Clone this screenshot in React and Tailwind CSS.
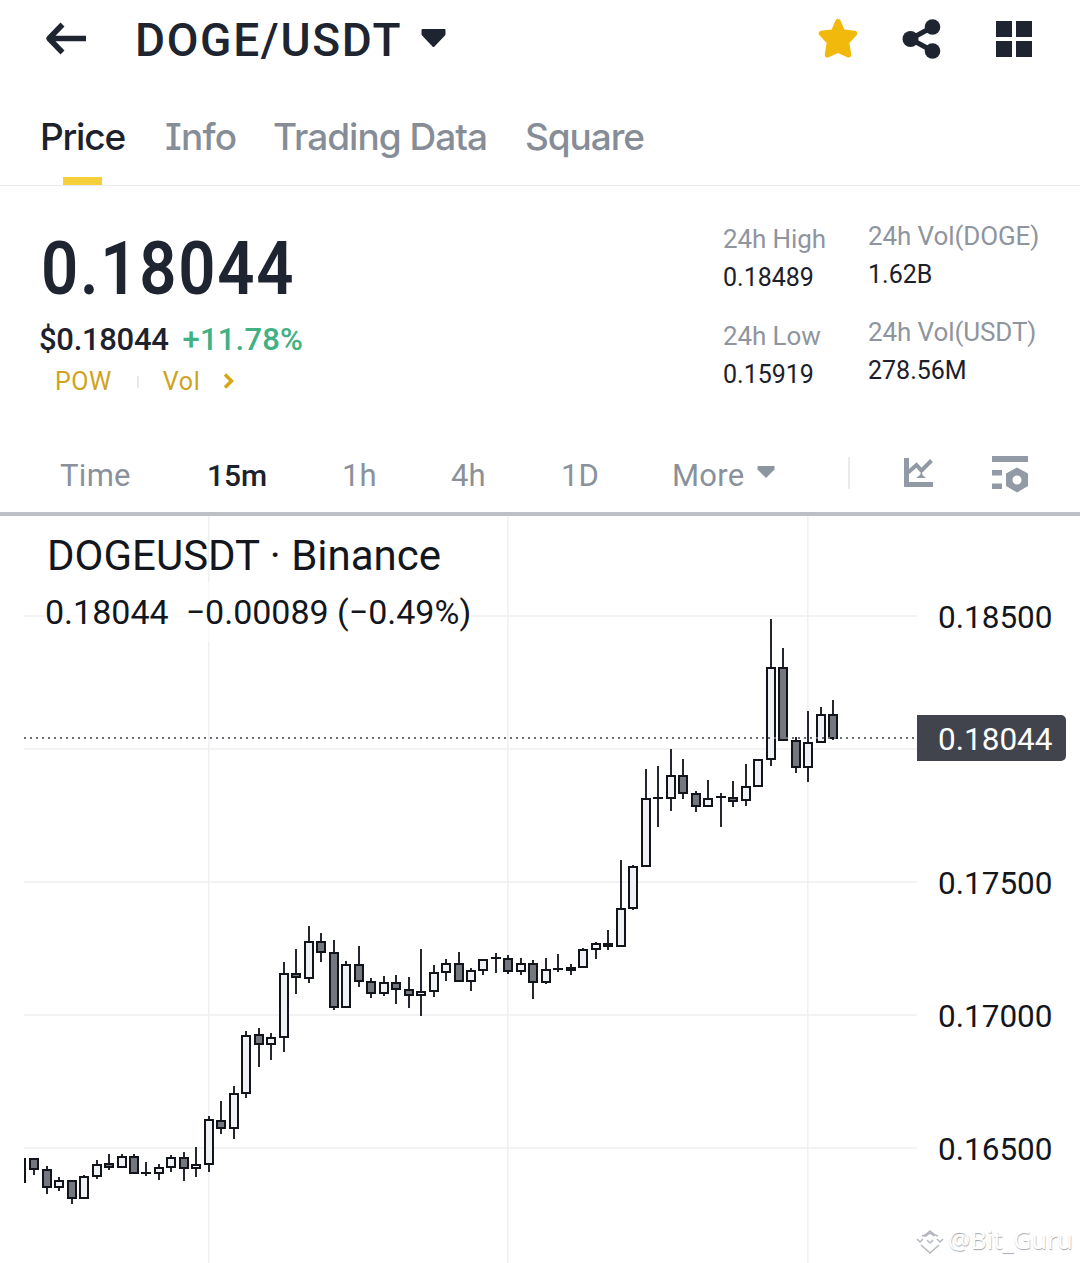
import React from "react";

// [center x, wick top, body top, body bottom, wick bottom, kind] — u: rising, d: falling
const candles = [
  [21, 1158, 1158, 1183, 1183, "u"], [34, 1158, 1158, 1170, 1175, "d"], [47, 1166, 1169, 1188, 1194, "d"],
  [59, 1177, 1180, 1188, 1191, "u"], [72, 1180, 1180, 1199, 1204, "d"], [84, 1175, 1176, 1199, 1199, "u"],
  [97, 1160, 1164, 1177, 1179, "u"], [109, 1154, 1163, 1168, 1170, "d"], [122, 1154, 1156, 1168, 1168, "u"],
  [134, 1154, 1156, 1174, 1174, "d"], [146, 1162, 1172, 1174, 1176, "d"], [159, 1164, 1167, 1174, 1180, "u"],
  [171, 1155, 1157, 1168, 1172, "u"], [184, 1152, 1157, 1169, 1181, "d"], [196, 1147, 1164, 1169, 1177, "u"],
  [209, 1116, 1119, 1165, 1172, "u"], [221, 1101, 1120, 1129, 1134, "d"], [234, 1086, 1093, 1129, 1139, "u"],
  [246, 1031, 1035, 1094, 1098, "u"], [259, 1028, 1034, 1045, 1067, "d"], [271, 1033, 1037, 1045, 1060, "u"],
  [284, 962, 973, 1038, 1052, "u"], [296, 949, 973, 978, 994, "d"], [309, 926, 941, 979, 983, "u"],
  [321, 933, 941, 953, 962, "d"], [334, 940, 952, 1008, 1010, "d"], [346, 961, 964, 1008, 1008, "u"],
  [359, 946, 964, 982, 987, "d"], [371, 978, 981, 994, 998, "d"], [384, 976, 982, 994, 996, "u"],
  [396, 975, 982, 990, 1004, "d"], [409, 977, 989, 996, 1008, "d"], [421, 949, 991, 996, 1016, "u"],
  [434, 965, 972, 992, 997, "u"], [446, 959, 963, 973, 981, "u"], [459, 952, 963, 982, 982, "d"],
  [471, 968, 970, 982, 991, "u"], [483, 959, 959, 971, 975, "u"], [496, 953, 957, 959, 973, "d"],
  [508, 955, 958, 972, 974, "d"], [521, 958, 963, 972, 975, "u"], [533, 960, 963, 983, 999, "d"],
  [546, 958, 969, 983, 984, "u"], [558, 954, 968, 970, 972, "d"], [571, 964, 967, 971, 975, "d"],
  [583, 948, 949, 968, 968, "u"], [596, 942, 943, 950, 959, "u"], [608, 930, 943, 947, 950, "d"],
  [621, 860, 908, 947, 947, "u"], [633, 865, 866, 909, 910, "u"], [646, 769, 798, 867, 867, "u"],
  [658, 766, 797, 799, 827, "d"], [671, 749, 775, 799, 811, "u"], [683, 759, 775, 794, 799, "d"],
  [696, 791, 793, 807, 812, "d"], [708, 780, 798, 807, 807, "u"], [721, 793, 796, 798, 827, "d"],
  [733, 781, 797, 802, 807, "d"], [746, 764, 786, 801, 806, "u"], [758, 759, 759, 787, 787, "u"],
  [771, 619, 667, 760, 766, "u"], [783, 648, 667, 741, 741, "d"], [796, 737, 740, 768, 773, "d"],
  [808, 711, 742, 768, 782, "u"], [821, 707, 714, 743, 743, "u"], [833, 700, 714, 739, 740, "d"],
];

function Candle({ c: [x, wt, bt, bb, wb, kind] }) {
  const h = bb - bt;
  return (
    <g>
      <rect x={x - 1} y={wt} width={2} height={wb - wt} fill="#25272f" />
      <rect x={x - 5} y={bt} width={10} height={h} fill="#12141c" />
      {h > 4 && <rect x={x - 3} y={bt + 2} width={6} height={h - 4} fill={kind === "u" ? "#f0f1f4" : "#75777e"} />}
    </g>
  );
}

function Chart() {
  return (
    <svg className="block" width="1080" height="747" viewBox="0 516 1080 747">
      <defs>
        <clipPath id="plot"><rect x="24" y="516" width="893" height="747" /></clipPath>
      </defs>
      {[209, 508, 808].map((x) => <rect key={x} x={x - 1} y="516" width="1.5" height="747" fill="#eff0f2" />)}
      {[616, 749, 882, 1015, 1148].map((y) => <rect key={y} x="24" y={y - 0.75} width="893" height="1.5" fill="#eff0f2" />)}
      <g clipPath="url(#plot)">{candles.map((c) => <Candle key={c[0]} c={c} />)}</g>
      <line x1="24" x2="917" y1="738" y2="738" stroke="#6b6d75" strokeWidth="2" strokeDasharray="2 4" />
    </svg>
  );
}

function AxisLabel({ children, className }) {
  return <div className={`absolute left-[938px] h-10 text-[31.5px] leading-10 text-[#14161d] ${className}`}>{children}</div>;
}

function Stat({ label, value }) {
  return (
    <div>
      <div className="h-[38px] text-[26px] leading-[38px] tracking-[-0.1px] text-[#8f959e]">{label}</div>
      <div className="h-[38px] text-[25px] leading-[40px] text-[#1c202a]">{value}</div>
    </div>
  );
}

function Header() {
  return (
    <header className="flex h-20 items-center text-[#1e2430]">
      <svg className="mt-[-2px] ml-[45px]" width="42" height="34" viewBox="0 0 42 34" fill="none" stroke="currentColor" strokeWidth="5.5">
        <path d="M17.5 2.5 4 16.5l13.500 14M4 16.500H41" strokeLinejoin="round" />
      </svg>
      <h1 className="ml-12 whitespace-nowrap text-[46px] font-medium leading-none tracking-[1.7px]">DOGE/USDT</h1>
      <svg className="ml-[19px] mt-[-4px]" width="25" height="20" viewBox="0 0 25 20" fill="currentColor">
        <path d="M1.500 1h22q1 0 1 1v4q0 1-.8 1.800L13.500 18.500q-1 1-2 0L1.300 7.800Q.5 7 .5 6V2q0-1 1-1z" />
      </svg>
      <div className="mt-[-3px] ml-auto flex items-center">
        <svg width="42" height="42" viewBox="0 0 42 42" fill="#f0b90b" stroke="#f0b90b" strokeWidth="5.5" strokeLinejoin="round">
          <path d="M21 3.700 25.500 14 37.500 15.500 29.500 24.200 31.500 36.800 21 32 10.500 36.800 12.500 24.200 4.500 15.500 16.500 14z" />
        </svg>
        <svg className="ml-[43px]" width="40" height="42" viewBox="0 0 40 42" fill="currentColor">
          <path d="M30.500 9 8.500 21l22 12" fill="none" stroke="currentColor" strokeWidth="5" />
          <circle cx="8.500" cy="21" r="8" /><circle cx="30.500" cy="9" r="7.800" /><circle cx="30.500" cy="33" r="7.800" />
        </svg>
        <svg className="ml-[53px] mr-[47px]" width="38" height="38" viewBox="0 0 38 38" fill="currentColor">
          <path d="M1 1h16v16H1zM21 1h16v16H21zM1 21h16v16H1zM21 21h16v16H21z" />
        </svg>
      </div>
    </header>
  );
}

function Tabs() {
  return (
    <nav className="flex h-[106px] border-b border-[#e9ebed] font-['Inter',sans-serif] text-[37px] font-medium text-[#868d97]">
      <div className="ml-10 flex h-[105px] w-[85px] flex-col items-center">
        <span className="h-[97px] w-full whitespace-nowrap leading-[114px] tracking-[-1.2px] text-[#1c212b]">Price</span>
        <span className="h-2 w-[39px] shrink-0 bg-[#f5d03a]" />
      </div>
      <span className="ml-[40px] w-[108px] leading-[114px] tracking-[-0.8px] [font-feature-settings:'cv08']">Info</span>
      <span className="w-[252px] whitespace-nowrap leading-[114px] tracking-[-1px]">Trading Data</span>
      <span className="leading-[114px] tracking-[-1.1px]">Square</span>
    </nav>
  );
}

function Summary() {
  return (
    <section className="flex h-[250px]">
      <div className="w-[723px] whitespace-nowrap pt-[42px]">
        <div className="ml-[41px] h-20 origin-left scale-x-[0.87] text-[75px] font-semibold leading-[80px] tracking-[2px] text-[#1e2430]">0.18044</div>
        <div className="ml-[39px] mt-[12px] flex h-[40px] gap-[14px] text-[31px] font-medium leading-[40px]">
          <span className="text-[#1e222d] tracking-[-0.3px]">$0.18044</span>
          <span className="tracking-[0.2px] text-[#41b183]">+11.78%</span>
        </div>
        <div className="ml-[55px] flex h-[44px] items-center text-[25px] leading-[44px] text-[#cfa41c]">
          <span className="tracking-[0.5px]">POW</span>
          <span className="ml-[25px] h-3 w-[2px] bg-[#e6e8ea]" />
          <span className="ml-[24px] tracking-[0.8px]">Vol</span>
          <svg className="mt-[-3px] ml-[22px]" width="12" height="16" viewBox="0 0 12 16" fill="none" stroke="#d9a514" strokeWidth="3.500">
            <path d="M2 1.500 8.500 8 2 14.500" />
          </svg>
        </div>
      </div>
      <div className="flex w-[145px] flex-col gap-[21px] pt-[34px]">
        <Stat label="24h High" value="0.18489" />
        <Stat label="24h Low" value="0.15919" />
      </div>
      <div className="flex flex-col gap-[20px] whitespace-nowrap pt-[31px]">
        <Stat label="24h Vol(DOGE)" value="1.62B" />
        <Stat label="24h Vol(USDT)" value="278.56M" />
      </div>
    </section>
  );
}

function Toolbar() {
  return (
    <div className="flex h-20 items-center border-b-4 border-[#bcc0c4] text-[31px] text-[#8a919b]">
      <div className="flex pt-1 leading-[76px]">
        <span className="ml-[60px] w-[147px] tracking-[0.3px]">Time</span>
        <span className="w-[135px] text-[30px] font-medium text-[#1c212b]">15m</span>
        <span className="w-[109px]">1h</span>
        <span className="w-[110px]">4h</span>
        <span className="w-[111px]">1D</span>
        <span className="tracking-[0.3px]">More</span>
      </div>
      <svg className="ml-[12px] mt-[-5px]" width="18" height="14" viewBox="0 0 18 14" fill="#8d959f">
        <path d="M1 1h16q.5 0 .5.500V4.500L9 13 .5 4.500V1.500Q.5 1 1 1z" />
      </svg>
      <span className="mt-[-2px] ml-[73px] h-8 w-[2px] bg-[#e8eaed]" />
      <svg className="mt-[-3px] ml-[54px]" width="30" height="30" viewBox="0 0 30 30" fill="none" stroke="#929aa5">
        <path d="M2.500 0v26.500H29" strokeWidth="5" />
        <path d="M4 14.500 12.500 7l5 5.500L27.500 2.500" strokeWidth="4" />
        <path d="M12 20h10l-3.500-3-1-4-1.500 4z" fill="#929aa5" stroke="none" />
      </svg>
      <svg className="mt-[-1px] ml-[57px]" width="38" height="38" viewBox="0 0 38 38" fill="#929aa5">
        <path d="M1 1h36v6H1zM1 15h10v5.500H1zM1 28.500h10V34H1z" />
        <path fillRule="evenodd" d="M26 12.500 37 18.500v12.500L26 37.500 15 31V18.500zM26 20.500a4.500 4.500 0 1 0 0 9 4.500 4.500 0 0 0 0-9z" />
      </svg>
    </div>
  );
}

export default function App() {
  return (
    <div className="h-[1263px] w-[1080px] overflow-hidden bg-white font-['Roboto',sans-serif]">
      <Header />
      <Tabs />
      <Summary />
      <Toolbar />
      <div className="relative h-[747px]">
        <Chart />
        <div className="absolute left-[45px] top-[12px] whitespace-nowrap text-[#14161d]">
          <div className="ml-[2px] h-[54px] text-[42px] leading-[56px]">DOGEUSDT · Binance</div>
          <div className="flex h-[60px] gap-[17px] bg-white/70 text-[34px] leading-[60px]">
            <span>0.18044</span>
            <span>−0.00089 (−0.49%)</span>
          </div>
        </div>
        <AxisLabel className="top-[82px]">0.18500</AxisLabel>
        <AxisLabel className="top-[348px]">0.17500</AxisLabel>
        <AxisLabel className="top-[481px]">0.17000</AxisLabel>
        <AxisLabel className="top-[614px]">0.16500</AxisLabel>
        <div className="absolute left-[917px] top-[199px] h-[46px] w-[149px] rounded-r-[5px] bg-[#42444d] pl-[21px] text-[31.5px] leading-[49px] text-white">0.18044</div>
        <div className="absolute left-[916px] top-[708px] flex h-8 items-center gap-[4px] whitespace-nowrap font-['Noto_Sans',sans-serif] text-[25px] text-white [text-shadow:0.5px_1px_1px_#a3a8af]">
          <svg className="mt-1" width="28" height="26" viewBox="0 0 28 26" fill="none" stroke="#b4b8be" strokeWidth="1.500">
            <path d="m6 7 3-1 5-4 5 4 3 1M8 7l2 0 4-3 4 3M1 10l3 3 3-3M21 10l3 3 3-3M11 11l3 3 3-3M5 16l9 8 9-8" />
          </svg>
          <span>@Bit_Guru</span>
        </div>
      </div>
    </div>
  );
}
